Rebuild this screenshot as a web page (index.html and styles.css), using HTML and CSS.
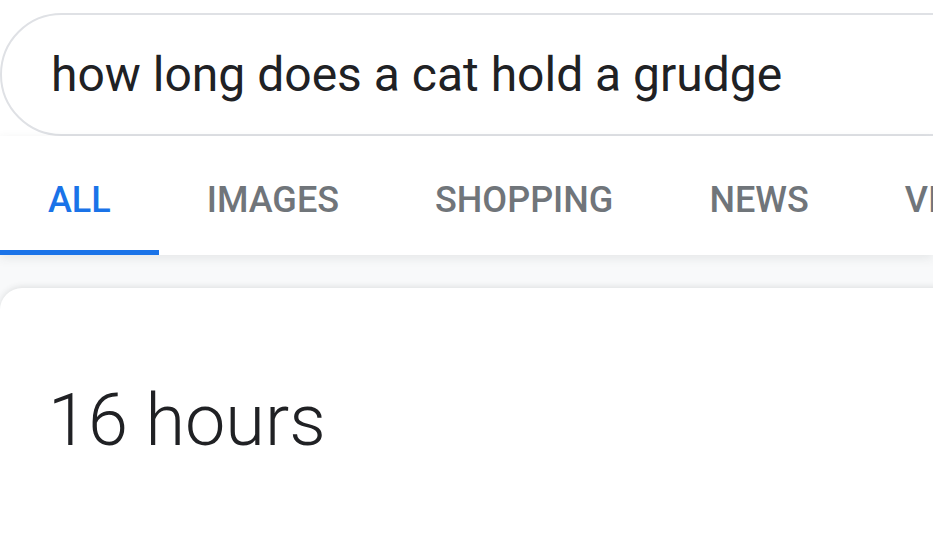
FILE: index.html
```html
<!DOCTYPE html>
<html lang="en">
<head>
    <meta charset="UTF-8">
    <meta name="viewport" content="width=device-width, initial-scale=1.0">
    <title>how long does a cat hold a grudge</title>
    <link rel="stylesheet" href="styles.css">
</head>
<body>

    <div class="page">
        <!-- Search box -->
        <div class="search-box">
            <span class="query">how long does a cat hold a grudge</span>
        </div>

        <!-- Result tabs -->
        <nav class="tabs">
            <a class="tab active">ALL</a>
            <a class="tab">IMAGES</a>
            <a class="tab">SHOPPING</a>
            <a class="tab">NEWS</a>
            <a class="tab">VIDEOS</a>
            <a class="tab">MAPS</a>
        </nav>

        <!-- Answer card -->
        <div class="results">
            <div class="card">
                <div class="answer">16 hours</div>
            </div>
        </div>
    </div>

</body>
</html>
```

FILE: styles.css
```css
/* Base */
body {
    margin: 0;
    padding: 0;
    font-family: Roboto, 'Noto Sans', Arial, sans-serif;
    background-color: #ffffff;
    color: #202124;
    overflow: hidden;
}

.page {
    width: 933px;
    height: 545px;
    overflow: hidden;
    display: flex;
    flex-direction: column;
}

/* Search box */
.search-box {
    margin-top: 13px;
    width: 1100px;
    height: 119px;
    border: 2px solid #dfe1e5;
    border-radius: 62px;
    display: flex;
    align-items: center;
    padding-left: 49px;
    box-sizing: content-box;
    flex-shrink: 0;
}

.query {
    font-size: 48px;
    line-height: 1;
    color: #202124;
    white-space: nowrap;
}

/* Tabs */
.tabs {
    display: flex;
    white-space: nowrap;
    position: relative;
    z-index: 1;
    background-color: #ffffff;
    box-shadow: 0 3px 10px rgba(60, 64, 67, 0.1);
    flex-shrink: 0;
}

.tab {
    padding: 46px 48px 32px;
    font-size: 36px;
    line-height: 1;
    font-weight: 500;
    color: #70757a;
    border-bottom: 5px solid transparent;
}

.tab.active {
    color: #1a73e8;
    border-bottom-color: #1a73e8;
}

/* Results area */
.results {
    flex: 1;
    background-color: #f8f9fa;
    padding-top: 33px;
}

.card {
    height: 100%;
    width: 1100px;
    background-color: #ffffff;
    border-radius: 22px 0 0 0;
    box-shadow: 0 -1px 6px rgba(60, 64, 67, 0.14);
    padding: 97px 0 0 48px;
    box-sizing: border-box;
}

.answer {
    font-size: 72px;
    font-weight: 300;
    line-height: 1;
    color: #202124;
}
```
